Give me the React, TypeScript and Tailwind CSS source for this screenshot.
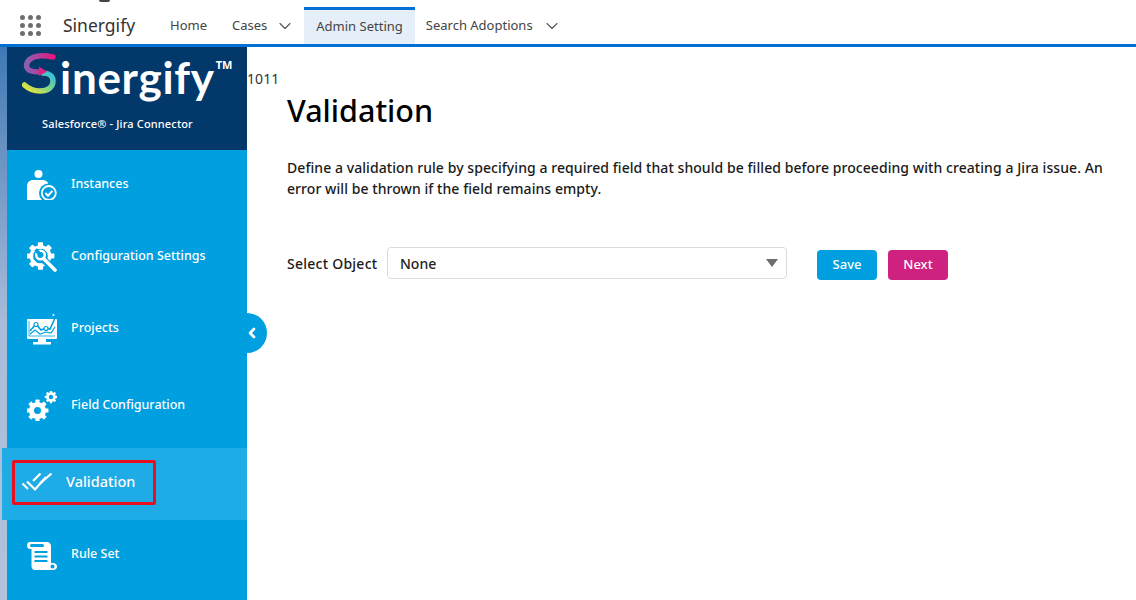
import React from 'react';
import { ChevronDown, ChevronLeft } from 'lucide-react';

const Gear = ({ cx, cy, r, hole }: { cx: number; cy: number; r: number; hole: number }) => (
  <g>
    {[0, 45, 90, 135, 180, 225, 270, 315].map((a) => (
      <rect
        key={a}
        x={cx - r * 0.24}
        y={cy - r * 1.28}
        width={r * 0.48}
        height={r * 0.6}
        rx={r * 0.08}
        fill="white"
        transform={`rotate(${a} ${cx} ${cy})`}
      />
    ))}
    <circle cx={cx} cy={cy} r={(r + hole) / 2} fill="none" stroke="white" strokeWidth={r - hole} />
  </g>
);

const InstancesIcon = () => (
  <svg width="30" height="30" viewBox="0 0 30 30">
    <circle cx="11.500" cy="4" r="4" fill="white" />
    <path d="M0 30V16C0 12 3 10 6 10H15C19 10 21.500 12 22 16V30Z" fill="white" />
    <circle cx="21.500" cy="23" r="9.500" fill="#009fdf" />
    <circle cx="21.800" cy="23" r="7" fill="none" stroke="white" strokeWidth="1.800" />
    <path d="M18.300 23L21 25.700L25.400 20.800" fill="none" stroke="white" strokeWidth="2" />
  </svg>
);

const ConfigIcon = () => (
  <svg width="30" height="30" viewBox="0 0 30 30">
    <Gear cx={13.500} cy={14} r={10.800} hole={7.500} />
    <path d="M16 17L28 28.500" stroke="#009fdf" strokeWidth="7" strokeLinecap="round" />
    <circle cx="13.500" cy="13" r="4.300" fill="#009fdf" stroke="white" strokeWidth="2.600" />
    <path d="M13.500 13L8.500 7.500" stroke="#009fdf" strokeWidth="3.500" />
    <path d="M16.500 16.500L28 28" stroke="white" strokeWidth="3.600" strokeLinecap="round" />
  </svg>
);

const ProjectsIcon = () => (
  <svg width="30" height="31" viewBox="0 0 30 31">
    <rect x="0" y="5" width="30" height="20" rx="1" fill="white" />
    <rect x="11" y="25" width="8" height="3" fill="white" />
    <rect x="6" y="28" width="18" height="2.500" fill="white" />
    <path d="M2 7V22H28" fill="none" stroke="#009fdf" strokeWidth="0.800" />
    <path d="M3 17L9 10L14 16L19 14L23 15L28 4" fill="none" stroke="#009fdf" strokeWidth="1.600" />
    <path d="M3 20L8 16L13 20L19 18L24 19L28 13" fill="none" stroke="#009fdf" strokeWidth="1.200" />
    <circle cx="9" cy="10.500" r="2" fill="white" stroke="#009fdf" strokeWidth="1.200" />
    <circle cx="19" cy="14.500" r="2" fill="white" stroke="#009fdf" strokeWidth="1.200" />
    <circle cx="26.500" cy="1" r="1" fill="white" />
  </svg>
);

const FieldIcon = () => (
  <svg width="30" height="30" viewBox="0 0 30 30">
    <Gear cx={10.500} cy={19.500} r={8.600} hole={3.500} />
    <Gear cx={24} cy={6} r={4.800} hole={2.200} />
  </svg>
);

const ValidationIcon = () => (
  <svg width="30" height="20" viewBox="0 0 30 20" fill="none" stroke="white" strokeWidth="2.200">
    <path d="M0.500 10.500L6 16" />
    <path d="M5 8.500L13 16.500L24 4" />
    <path d="M11 8L18.500 0.500" />
    <path d="M18 10.500L29.500 0.500" />
  </svg>
);

const RuleSetIcon = () => (
  <svg width="30" height="28" viewBox="0 0 30 28">
    <path d="M3 0H20C22.500 0 24 2 24 4V22H15V24C15 26 13.500 28 11 28H8C6 28 4.500 26.500 4.500 24V7H3C1 7 0 5.500 0 3.500C0 1.500 1 0 3 0Z" fill="white" />
    <rect x="3" y="2" width="14" height="3" rx="1.500" fill="#009fdf" />
    <rect x="7.500" y="9" width="13" height="2" fill="#009fdf" />
    <rect x="7.500" y="13.500" width="13" height="2" fill="#009fdf" />
    <rect x="7.500" y="18" width="13" height="2" fill="#009fdf" />
    <path d="M10 28H26C28.500 28 30 26.500 30 24.500C30 22.500 28.500 21 26 21H15V24C15 26 13 28 10 28Z" fill="white" />
    <circle cx="25.500" cy="24.500" r="2" fill="#009fdf" />
  </svg>
);

const LogoS = () => (
  <svg width="38" height="44" viewBox="0 0 38 44" fill="none" strokeWidth="5.500" strokeLinecap="round">
    <defs>
      <linearGradient id="top" x1="0" y1="0" x2="1" y2="0">
        <stop offset="0" stopColor="#8a5fb0" />
        <stop offset="1" stopColor="#e5187f" />
      </linearGradient>
      <linearGradient id="bottom" x1="0" y1="1" x2="1" y2="0">
        <stop offset="0" stopColor="#f7e52c" />
        <stop offset="0.5" stopColor="#7fd58a" />
        <stop offset="1" stopColor="#2fbfe0" />
      </linearGradient>
    </defs>
    <path d="M31 5C22 3 15 3 10 6C4 9 3 15 7 18C10 20 13 20 18 20" stroke="url(#top)" />
    <path d="M2.500 33C8 38 14 39 18 39C26 39 31 35 31 29C31 24 27 21 21 21" stroke="url(#bottom)" />
    <path d="M17 14.500V24L25 19.500Z" fill="#d8247f" />
  </svg>
);

const MenuRow = ({ icon, label, className }: { icon: React.ReactNode; label: string; className: string }) => (
  <div className={`flex items-center pl-[20px] ${className}`}>
    <div className="flex w-[30px] justify-center">{icon}</div>
    <span className="mb-[2px] ml-[14px] text-[12.5px] font-medium text-white">{label}</span>
  </div>
);

export default function App() {
  return (
    <div className="h-[600px] w-[1136px] overflow-hidden bg-white font-['Noto_Sans',sans-serif]">
      <header className="relative flex h-[47px] items-stretch border-b-[3px] border-[#0070d2]">
        <span className="absolute top-0 left-[99px] h-[2px] w-[11px] rounded-b-full bg-[#444444]" />
        <div className="grid w-[63px] shrink-0 grid-cols-[repeat(3,5px)] content-center gap-[3px] pt-[6px] pl-[20px]">
          {[1, 2, 3, 4, 5, 6, 7, 8, 9].map((d) => (
            <span key={d} className="h-[5px] w-[5px] rounded-full bg-[#706e6b]" />
          ))}
        </div>
        <div className="flex w-[95px] shrink-0 items-center pt-[7px] text-[17.5px] text-[#333333]">Sinergify</div>
        <div className="flex items-center pt-[8px] pr-[13px] pl-[12px]">
          <span className="text-[13px] text-[#444444]">Home</span>
        </div>
        <div className="flex items-center gap-[8px] pt-[8px] pr-[9px] pl-[12px]">
          <span className="text-[13px] text-[#444444]">Cases</span>
          <ChevronDown size={20} strokeWidth={1.300} className="text-[#555555]" />
        </div>
        <div className="mt-[7px] flex items-center border-t-[3px] border-[#0070d2] bg-[#e5eff9] px-[12px]">
          <span className="text-[13px] text-[#444444]">Admin Setting</span>
        </div>
        <div className="flex items-center gap-[9px] pt-[8px] pl-[11px]">
          <span className="text-[13px] text-[#444444]">Search Adoptions</span>
          <ChevronDown size={20} strokeWidth={1.300} className="text-[#555555]" />
        </div>
      </header>

      <div className="flex h-[553px]">
        <aside className="relative w-[247px] shrink-0 bg-gradient-to-b from-[#3f79b5] via-[#a9bcd9] to-[#b3c2dc] pl-[7px]">
          <div className="relative h-[103px] bg-[#03386a] pl-[15px]">
            <div className="flex items-start">
              <div className="mt-[5px] shrink-0">
                <LogoS />
              </div>
              <span className="mt-[2px] font-['Lato',sans-serif] text-[44px] leading-[56px] font-bold tracking-[0.7px] text-white">inergify</span>
              <span className="mt-[11px] ml-[1px] text-[11px] leading-[14px] font-bold text-white">TM</span>
            </div>
            <p className="absolute top-[69px] left-[35px] text-[11px] font-medium tracking-[0.15px] text-white">Salesforce® - Jira Connector</p>
          </div>
          <div className="bg-[#009fdf]">
            <MenuRow icon={<InstancesIcon />} label="Instances" className="h-[70px]" />
            <MenuRow icon={<ConfigIcon />} label="Configuration Settings" className="h-[74px]" />
            <MenuRow icon={<ProjectsIcon />} label="Projects" className="h-[70px]" />
            <MenuRow icon={<FieldIcon />} label="Field Configuration" className="h-[84px]" />
          </div>
          <div className="-ml-[5px] h-[72px] bg-[#1fabe5] pt-[12px] pl-[10px]">
            <div className="flex h-[45px] w-[144px] items-center rounded-[2px] border-[3px] border-[#e8101e] pl-[7px]">
              <ValidationIcon />
              <span className="mb-[2px] ml-[14px] text-[14.500px] font-medium text-white">Validation</span>
            </div>
          </div>
          <MenuRow icon={<RuleSetIcon />} label="Rule Set" className="h-[80px] bg-[#009fdf] pb-[9px]" />
          <button className="absolute top-[266px] left-[247px] flex h-[40px] w-[20px] items-center rounded-r-full bg-[#009fdf] text-white">
            <ChevronLeft size={16} strokeWidth={4} className="-ml-[3px]" />
          </button>
        </aside>

        <main className="min-w-0 flex-1">
          <div className="pt-[24px] text-[14px] leading-[16px] tracking-[0.1px] text-[#333333]">1011</div>
          <div className="pl-[40px]">
            <h1 className="mt-[2px] text-[30.500px] leading-[42px] font-medium text-black">Validation</h1>
            <p className="mt-[26px] w-[830px] text-[14px] leading-[21px] font-medium tracking-[0.065px] text-[#1a1a1a]">
              Define a validation rule by specifying a required field that should be filled before proceeding with creating a Jira issue. An error will be thrown if the field remains empty.
            </p>
            <div className="mt-[47px] flex items-center">
              <label className="w-[100px] text-[14px] font-medium tracking-[0.25px] text-[#1a1a1a]">Select Object</label>
              <div className="flex h-[32px] w-[400px] items-center justify-between rounded-[4px] border border-[#dddbda] pr-[8px] pl-[12px]">
                <span className="text-[14px] font-medium text-[#222222]">None</span>
                <span className="h-0 w-0 border-x-[6px] border-t-[8px] border-x-transparent border-t-[#706e6b]" />
              </div>
              <button className="mt-[4px] ml-[30px] h-[30px] w-[60px] rounded-[4px] bg-[#009fdf] text-[13px] font-medium text-white">Save</button>
              <button className="mt-[4px] ml-[11px] h-[30px] w-[60px] rounded-[4px] bg-[#cf2180] text-[13px] font-medium text-white">Next</button>
            </div>
          </div>
        </main>
      </div>
    </div>
  );
}
